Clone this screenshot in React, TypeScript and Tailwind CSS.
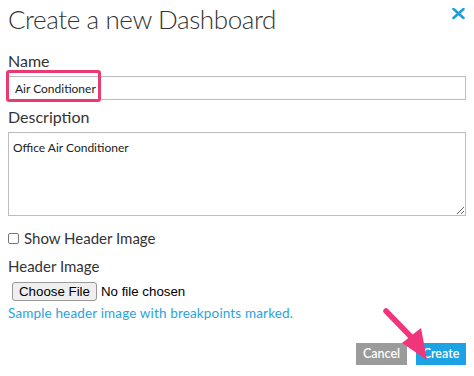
import React from "react";

const font = { fontFamily: "Lato, 'Open Sans', sans-serif" };

const App: React.FC = () => {
  return (
    <div className="w-[474px] h-[376px] bg-white text-[#333] relative overflow-hidden font-['Lato',sans-serif]">
      <div className="px-2 pt-[2px]">
        <div className="flex items-start justify-between">
          <h1 className="text-[26px] font-light leading-[34px] text-[#333] tracking-[-0.4px]">
            Create a new Dashboard
          </h1>
          <svg width="13" height="11" viewBox="0 0 13 11" className="mt-[6px] mr-[1px]">
            <path d="M1.5 1 L11.5 10 M11.5 1 L1.5 10" stroke="#1e9fdc" strokeWidth="2.6" strokeLinecap="round" />
          </svg>
        </div>

        <div className="mt-[15px] text-[16px] leading-[20px]">Name</div>
        <div className="relative mt-[5px]">
          <input
            readOnly
            value="Air Conditioner"
            className="w-full h-[24px] border border-[#bdbdbd] px-[6px] text-[12px] text-[#222] outline-none block"
          />
          <div className="absolute left-[-2px] top-[-6px] w-[95px] h-[32px] border-[3px] border-[#ea3a6f] rounded-[3px]" />
        </div>

        <div className="mt-[7px] text-[16px] leading-[20px]">Description</div>
        <textarea
          readOnly
          value="Office Air Conditioner"
          className="mt-[5px] w-full h-[84px] border border-[#bdbdbd] px-[4px] py-[6px] text-[12px] text-[#222] outline-none resize-y block"
        />

        <label className="mt-[12px] flex items-center gap-[5px] text-[15px] leading-[20px]">
          <span className="w-[11px] h-[11px] border border-[#777] rounded-[2px] bg-white" />
          Show Header Image
        </label>

        <div className="mt-[8px] text-[15px] leading-[20px]">Header Image</div>
        <div className="mt-[6px] flex items-center pl-[4px]" style={{ fontFamily: "'Liberation Sans', Arial, sans-serif" }}>
          <span className="h-[19px] px-[6px] flex items-center border border-[#999] rounded-[3px] bg-[#efefef] text-[13.3px] text-black">
            Choose File
          </span>
          <span className="ml-[4px] text-[13.3px] text-black">No file chosen</span>
        </div>
        <a className="block mt-[1px] text-[13.5px] text-[#2aa3dc] tracking-[0.15px]" style={font}>
          Sample header image with breakpoints marked.
        </a>

        <div className="flex justify-end gap-[9px] mt-[20px]">
          <button className="w-[51px] h-[22px] bg-[#9b9b9b] text-white text-[12.5px] font-semibold">Cancel</button>
          <button className="w-[50px] h-[22px] bg-[#1ba3e6] text-white text-[12.5px] font-semibold">Create</button>
        </div>
      </div>

      <svg className="absolute left-0 top-0 pointer-events-none" width="474" height="376">
        <line x1="386" y1="311" x2="416" y2="342" stroke="#f0357a" strokeWidth="5.5" strokeLinecap="round" />
        <polygon points="427,360 402,343 421,328" fill="#f0357a" />
      </svg>
    </div>
  );
};

export default App;
